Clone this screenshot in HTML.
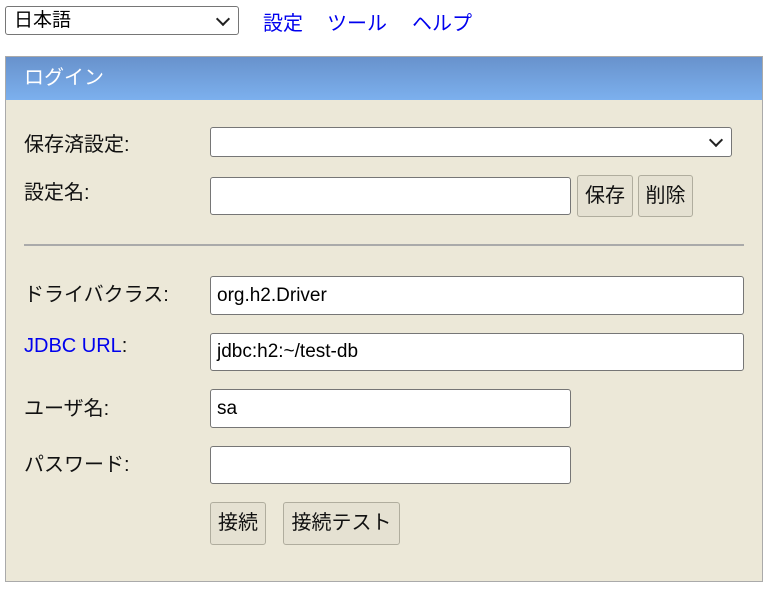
<!DOCTYPE html>
<html><head><meta charset="utf-8"><style>
body{margin:0;background:#fff;font-family:"Liberation Sans","Noto Sans CJK JP",sans-serif;width:768px;height:589px;position:relative;overflow:hidden}
.a{position:absolute}
.sel{border:1px solid #767676;border-radius:3px;background:#fff;box-sizing:border-box}
.chev{position:absolute;right:10px;top:50%;width:8px;height:8px;border-right:2px solid #222;border-bottom:2px solid #222;transform:translateY(-70%) rotate(45deg)}
.lnk{color:#0000ee;font-size:20px}
.panel{left:5px;top:56px;width:758px;height:526px;border:1px solid #aaa;background:#ece8d8;box-sizing:border-box}
.hd{left:0;top:0;right:0;height:43px;background:linear-gradient(#6892cc,#7cb0ee);color:#fff;font-size:20px;line-height:43px;padding-left:18px}
.lb{font-size:20px;color:#111;left:18px}
.in{background:#fff;border:1px solid #767676;border-radius:3px;box-sizing:border-box;font-size:19px;padding-left:6px;color:#000}
.bt{border:1px solid #b0ad9e;border-radius:3px;background:#e5e1d2;box-sizing:border-box;font-size:20px;text-align:center;color:#111}
</style></head><body>
<div class="a sel" style="left:5px;top:6px;width:234px;height:29px;font-size:19px;line-height:27px;padding-left:8px">日本語<div class="chev"></div></div>
<div class="a lnk" style="left:263px;top:7px">設定</div>
<div class="a lnk" style="left:327px;top:7px">ツール</div>
<div class="a lnk" style="left:412px;top:7px">ヘルプ</div>
<div class="a panel">
<div class="a hd">ログイン</div>
<div class="a lb" style="top:71px">保存済設定:</div>
<div class="a sel" style="left:204px;top:70px;width:522px;height:30px"><div class="chev"></div></div>
<div class="a lb" style="top:119px">設定名:</div>
<div class="a in" style="left:204px;top:120px;width:361px;height:38px"></div>
<div class="a bt" style="left:571px;top:118px;width:56px;height:42px;line-height:40px">保存</div>
<div class="a bt" style="left:632px;top:118px;width:55px;height:42px;line-height:40px">削除</div>
<div class="a" style="left:18px;top:187px;width:720px;height:0;border-top:2px solid #aaa"></div>
<div class="a lb" style="top:221px">ドライバクラス:</div>
<div class="a in" style="left:204px;top:219px;width:534px;height:39px;line-height:37px">org.h2.Driver</div>
<div class="a lb" style="top:278px"><span style="color:#0000ee">JDBC URL</span>:</div>
<div class="a in" style="left:204px;top:276px;width:534px;height:38px;line-height:36px">jdbc:h2:~/test-db</div>
<div class="a lb" style="top:335px">ユーザ名:</div>
<div class="a in" style="left:204px;top:332px;width:361px;height:39px;line-height:37px">sa</div>
<div class="a lb" style="top:391px">パスワード:</div>
<div class="a in" style="left:204px;top:389px;width:361px;height:38px"></div>
<div class="a bt" style="left:204px;top:445px;width:56px;height:43px;line-height:41px">接続</div>
<div class="a bt" style="left:277px;top:445px;width:117px;height:43px;line-height:41px">接続テスト</div>
</div>
</body></html>
